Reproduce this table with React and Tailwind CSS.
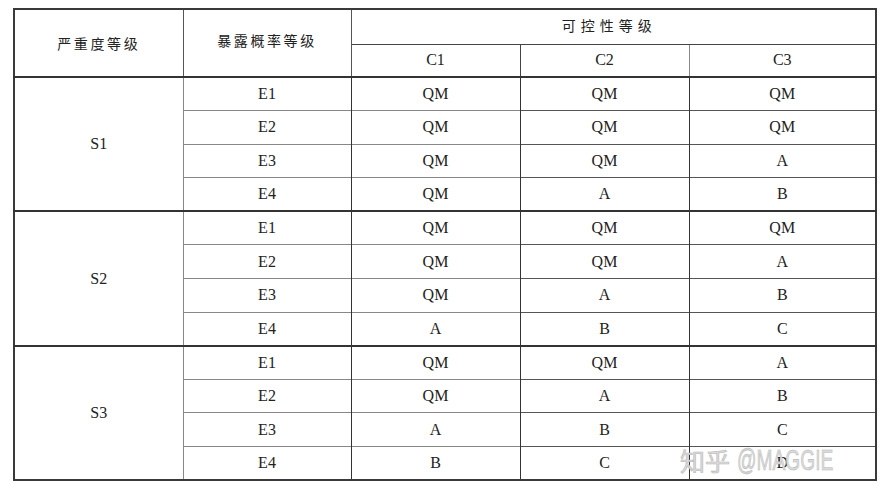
import React from "react";

const data = [
  { s: "S1", rows: [["E1","QM","QM","QM"],["E2","QM","QM","QM"],["E3","QM","QM","A"],["E4","QM","A","B"]] },
  { s: "S2", rows: [["E1","QM","QM","QM"],["E2","QM","QM","A"],["E3","QM","A","B"],["E4","A","B","C"]] },
  { s: "S3", rows: [["E1","QM","QM","A"],["E2","QM","A","B"],["E3","A","B","C"],["E4","B","C","D"]] },
];

const serif = { fontFamily: '"Liberation Serif", "Noto Sans CJK SC", serif' };
const cjk = { fontFamily: '"Noto Sans CJK SC", sans-serif' };

export default function App() {
  return (
    <div className="relative w-[888px] h-[497px] bg-white overflow-hidden">
      <div className="pl-[13px] pt-[8px]">
        <table
          className="table-fixed border-collapse w-[862px] text-[16px] text-[#222] border-2 border-[#3a3a3a]"
          style={serif}
        >
          <colgroup>
            <col className="w-[169px]" />
            <col className="w-[168px]" />
            <col className="w-[169px]" />
            <col className="w-[169px]" />
            <col className="w-[187px]" />
          </colgroup>
          <thead>
            <tr className="h-[35px]">
              <th rowSpan={2} className="font-normal border border-[#555] text-center align-middle text-[14px] tracking-[2.6px]" style={cjk}>严重度等级</th>
              <th rowSpan={2} className="font-normal border border-[#555] text-center align-middle text-[14px] tracking-[2.6px]" style={cjk}>
                <div className="-mt-[6px]">暴露概率等级</div>
              </th>
              <th colSpan={3} className="font-normal border border-[#444] text-center align-middle text-[14px] tracking-[5px]" style={cjk}>
                <div className="-mt-[3px] pr-[8px]">可控性等级</div>
              </th>
            </tr>
            <tr className="h-[33px]">
              <th className="font-normal border border-[#444] text-center">C1</th>
              <th className="font-normal border border-[#888] text-center">C2</th>
              <th className="font-normal border border-[#444] text-center">C3</th>
            </tr>
          </thead>
          <tbody>
            {data.map((g, gi) =>
              g.rows.map((r, ri) => (
                <tr
                  key={gi + "-" + ri}
                  className={
                    "h-[33.6px] " +
                    (ri === 0 ? "border-t-2 border-t-[#333]" : "")
                  }
                >
                  {ri === 0 && (
                    <td rowSpan={4} className="border border-[#888] text-center align-middle">
                      {g.s}
                    </td>
                  )}
                  <td className={"border-x border-x-[#333] text-center " + (ri === 0 ? "" : "border-t border-t-[#888]")}>{r[0]}</td>
                  <td className={"border-x border-x-[#333] text-center " + (ri === 0 ? "" : "border-t border-t-[#888]")}>{r[1]}</td>
                  <td className={"border-x border-x-[#333] text-center " + (ri === 0 ? "" : "border-t border-t-[#555]")}>{r[2]}</td>
                  <td className={"border-x border-x-[#333] text-center " + (ri === 0 ? "" : "border-t border-t-[#555]")}>{r[3]}</td>
                </tr>
              ))
            )}
          </tbody>
        </table>
      </div>
      <div
        className="absolute left-[680px] top-[445px] w-[200px] flex items-center whitespace-nowrap leading-none text-[#dcdcdc] pointer-events-none"
        style={{ WebkitTextStroke: "0.6px #b5b5b5" }}
      >
        <span className="shrink-0 text-[25px]" style={cjk}>知乎</span>
        <span
          className="shrink-0 inline-block ml-[7px] text-[30px] origin-left scale-x-[0.64]"
          style={{ fontFamily: '"Liberation Sans", sans-serif' }}
        >
          @MAGGIE
        </span>
      </div>
    </div>
  );
}
